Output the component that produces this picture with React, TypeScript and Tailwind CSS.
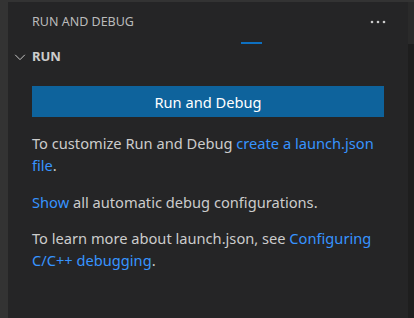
import React from 'react';

const font = { fontFamily: '"Noto Sans", "Open Sans", sans-serif' };

export default function App() {
  return (
    <div className="flex h-[318px] w-[414px] bg-[#333333] pt-[2px] text-[#cccccc]" style={font}>
      <div className="w-[8px] shrink-0" />
      <div className="flex flex-1 flex-col bg-[#252526]">
        {/* view title */}
        <div className="flex h-[40px] items-center pl-[24px] pr-[22px]">
          <span className="text-[12.5px] text-[#bbbbbb]">RUN AND DEBUG</span>
          <svg className="ml-auto" width="16" height="4" viewBox="0 0 16 4">
            <circle cx="2" cy="2" r="1.3" fill="#cccccc" />
            <circle cx="8" cy="2" r="1.3" fill="#cccccc" />
            <circle cx="14" cy="2" r="1.3" fill="#cccccc" />
          </svg>
        </div>
        <div className="flex h-[2px] justify-center">
          <div className="ml-[86px] h-[2px] w-[21px] bg-[#0e70c0]" />
        </div>
        {/* section header */}
        <div className="flex h-[26px] items-center pl-[5px]">
          <svg width="14" height="14" viewBox="0 0 16 16" className="mr-[5px]">
            <path d="M2.5 5.5 L8 11 L13.5 5.5" fill="none" stroke="#cccccc" strokeWidth="1.1" />
          </svg>
          <span className="text-[13px] font-bold text-[#cccccc]">RUN</span>
        </div>
        {/* welcome content */}
        <div className="flex flex-col px-[24px] pt-[16px] text-[14.65px] leading-[22px]">
          <button className="h-[31px] w-full bg-[#0e639c] text-[14.65px] text-white">Run and Debug</button>
          <p className="mt-[15px]">
            To customize Run and Debug <span className="text-[#3794ff]">create a launch.json file</span>.
          </p>
          <p className="mt-[15px]">
            <span className="text-[#3794ff]">Show</span> all automatic debug configurations.
          </p>
          <p className="mt-[14px]">
            To learn more about launch.json, see <span className="text-[#3794ff]">Configuring C/C++ debugging</span>.
          </p>
        </div>
      </div>
      <div className="flex w-[6px] shrink-0 flex-col">
        <div className="h-[42px] bg-[#2a2a2a]" />
        <div className="flex-1 bg-[#1e1e1e]" />
      </div>
    </div>
  );
}
